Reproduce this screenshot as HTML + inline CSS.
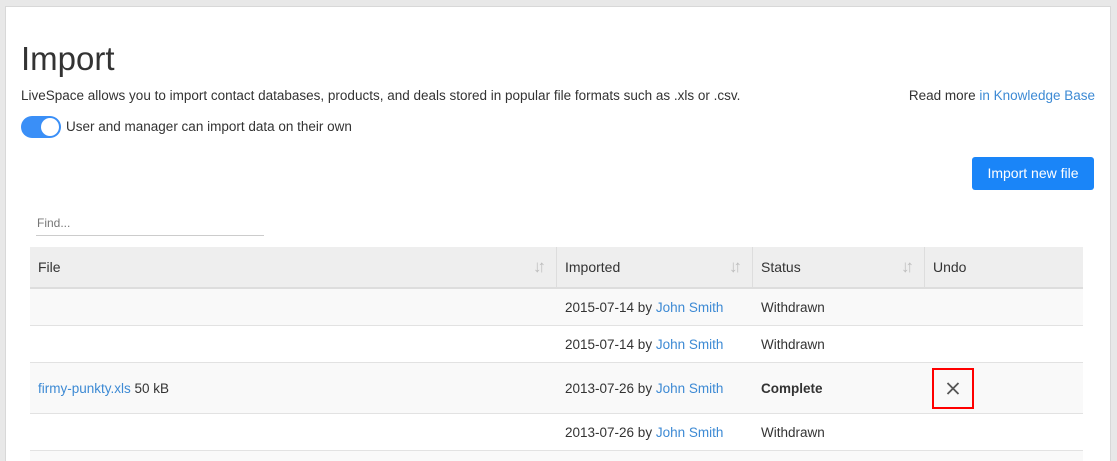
<!DOCTYPE html>
<html style="height:461px;overflow:hidden"><head><style>
body{margin:0;background:#e8e8e8;font-family:"Liberation Sans",sans-serif;color:#333;width:1117px;height:461px;overflow:hidden;position:relative}
.card{position:absolute;left:5px;top:6px;width:1104px;height:455px;background:#fff;border:1px solid #d8d8d8;border-bottom:none;overflow:hidden}
.a{position:absolute;white-space:nowrap}
a,.l{color:#3d8ad4;text-decoration:none}
.tbl{position:absolute;left:24px;top:240px;width:1053px}
.row{position:absolute;left:0;width:1053px;border-bottom:1px solid #e2e2e2;font-size:13.5px}
.sort{position:absolute;top:10px;color:#bdbdbd;font-size:17px;font-weight:bold;letter-spacing:-4px}
</style></head><body>
<div class="card">
<div class="a" style="left:15px;top:33px;font-size:33px;color:#333">Import</div>
<div class="a" style="left:15px;top:81px;font-size:13.5px">LiveSpace allows you to import contact databases, products, and deals stored in popular file formats such as .xls or .csv.</div>
<div class="a" style="right:15px;top:81px;font-size:13.5px">Read more <span class="l">in Knowledge Base</span></div>
<div class="a" style="left:15px;top:109px;width:40px;height:22px;border-radius:11px;background:#3a8ff7"><div style="position:absolute;right:2px;top:2px;width:18px;height:18px;border-radius:50%;background:#fff"></div></div>
<div class="a" style="left:60px;top:112px;font-size:13.5px">User and manager can import data on their own</div>
<div class="a" style="left:966px;top:150px;width:122px;height:33px;background:#1a85f8;border-radius:3px;color:#fff;font-size:14px;line-height:33px;text-align:center">Import new file</div>
<div class="a" style="left:31px;top:209px;font-size:12px;color:#777">Find...</div>
<div class="a" style="left:30px;top:228px;width:228px;border-top:1px solid #ccc"></div>
<div class="tbl">
<div class="row" style="top:0;height:40px;background:#eee;border-bottom:2px solid #ddd;font-size:14px">
<div class="a" style="left:8px;top:12px">File</div><div class="sort" style="left:503px">↓↑</div>
<div class="a" style="left:526px;top:0;height:40px;border-left:1px solid #ddd"></div>
<div class="a" style="left:535px;top:12px">Imported</div><div class="sort" style="left:699px">↓↑</div>
<div class="a" style="left:722px;top:0;height:40px;border-left:1px solid #ddd"></div>
<div class="a" style="left:731px;top:12px">Status</div><div class="sort" style="left:871px">↓↑</div>
<div class="a" style="left:894px;top:0;height:40px;border-left:1px solid #ddd"></div>
<div class="a" style="left:903px;top:12px">Undo</div>
</div>
<div class="row" style="top:42px;height:36px;background:#f9f9f9"><div class="a" style="left:535px;top:11px">2015-07-14 by <span class="l">John Smith</span></div><div class="a" style="left:731px;top:11px">Withdrawn</div></div>
<div class="row" style="top:79px;height:36px"><div class="a" style="left:535px;top:11px">2015-07-14 by <span class="l">John Smith</span></div><div class="a" style="left:731px;top:11px">Withdrawn</div></div>
<div class="row" style="top:116px;height:50px;background:#f9f9f9"><div class="a" style="left:8px;top:18px"><span class="l">firmy-punkty.xls</span> 50 kB</div><div class="a" style="left:535px;top:18px">2013-07-26 by <span class="l">John Smith</span></div><div class="a" style="left:731px;top:18px;font-weight:bold">Complete</div>
<div class="a" style="left:902px;top:5px;width:42px;height:41px;border:2px solid #f00;box-sizing:border-box"><svg width="38" height="37" viewBox="0 0 38 37"><path d="M13.5 13L24.5 24M24.5 13L13.5 24" stroke="#555" stroke-width="1.8"/></svg></div></div>
<div class="row" style="top:167px;height:36px"><div class="a" style="left:535px;top:11px">2013-07-26 by <span class="l">John Smith</span></div><div class="a" style="left:731px;top:11px">Withdrawn</div></div>
<div class="row" style="top:204px;height:20px;background:#f9f9f9;border:0"></div>
</div>
</div>
</body></html>
